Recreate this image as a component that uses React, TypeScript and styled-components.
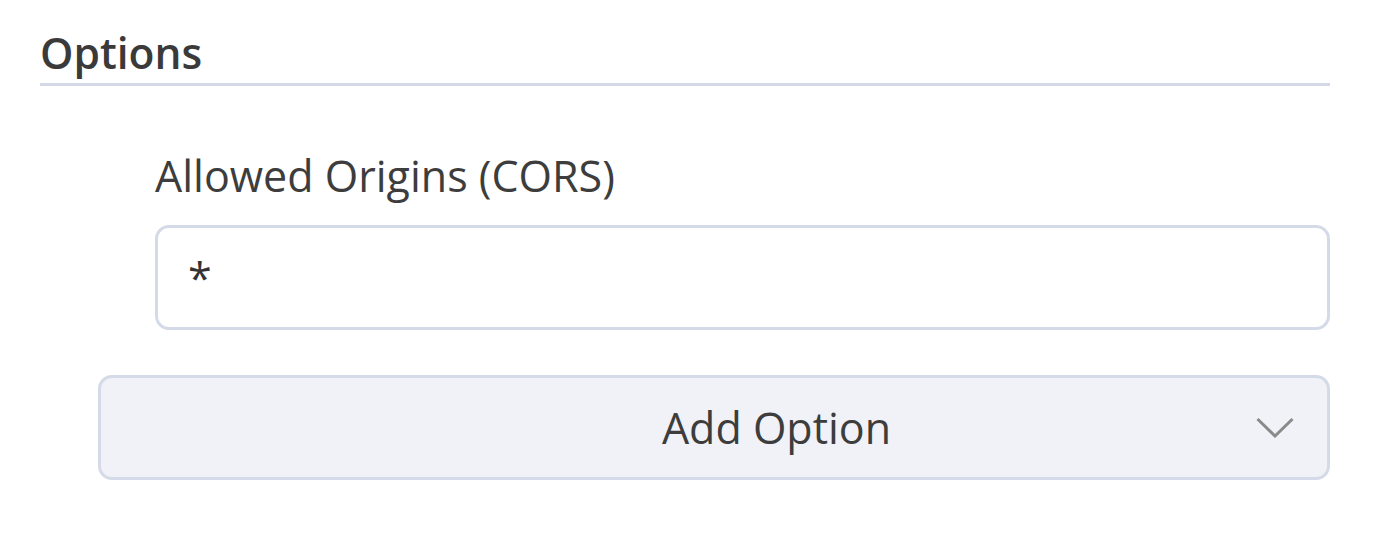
import styled, { createGlobalStyle } from 'styled-components'

const GlobalStyle = createGlobalStyle`
  html, body {
    margin: 0;
    padding: 0;
    background: #ffffff;
  }
  body {
    font-family: 'Open Sans', 'Noto Sans', sans-serif;
    color: #333;
  }
`

const Section = styled.section`
  width: 1290px;
  padding: 24px 0 0 40px;
`

const Heading = styled.h2`
  margin: 0;
  padding-bottom: 2px;
  font-size: 42.5px;
  font-weight: 600;
  line-height: 57px;
  color: #3a3a3a;
  border-bottom: 3px solid #d5d9e7;
`

const Field = styled.div`
  display: flex;
  flex-direction: column;
  margin: 61px 0 0 115px;
`

const Label = styled.label`
  font-size: 43px;
  line-height: 57px;
  color: #3d3d3d;
`

const Input = styled.div`
  box-sizing: border-box;
  height: 105px;
  margin-top: 21px;
  padding-left: 30px;
  display: flex;
  align-items: center;
  font-size: 43px;
  line-height: 57px;
  color: #333;
  background: #fff;
  border: 3px solid #d5dae8;
  border-radius: 14px;
`

const Select = styled.div`
  box-sizing: border-box;
  display: flex;
  align-items: center;
  height: 105px;
  margin: 45px 0 0 58px;
  padding: 0 33px 0 196px;
  background: #f1f2f7;
  border: 3px solid #d5dae8;
  border-radius: 14px;
`

const SelectText = styled.span`
  flex: 1;
  text-align: center;
  font-size: 43px;
  line-height: 57px;
  color: #3d3d3d;
`

const Chevron = () => (
  <svg width="38" height="21" viewBox="0 0 38 21" fill="none">
    <polyline points="1.5,2 19,19 36.5,2" stroke="#8a8a8a" strokeWidth="3" />
  </svg>
)

export default function App() {
  return (
    <>
      <GlobalStyle />
      <Section>
        <Heading>Options</Heading>
        <Field>
          <Label>Allowed Origins (CORS)</Label>
          <Input>*</Input>
        </Field>
        <Select>
          <SelectText>Add Option</SelectText>
          <Chevron />
        </Select>
      </Section>
    </>
  )
}
